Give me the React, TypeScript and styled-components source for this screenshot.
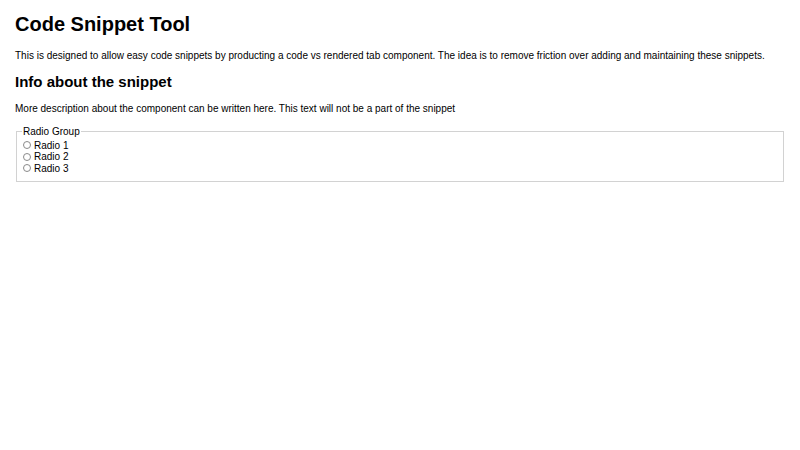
import React from "react";
import styled, { createGlobalStyle } from "styled-components";

const GlobalStyle = createGlobalStyle`
  html, body {
    margin: 0;
    padding: 0;
    background: #ffffff;
  }
  body {
    font-family: "Liberation Sans", Arial, sans-serif;
    color: #000000;
  }
`;

const Page = styled.main`
  padding: 0 15px;
  display: flow-root;
`;

const Title = styled.h1`
  font-size: 20px;
  font-weight: bold;
  margin: 13.4px 0;
`;

const Text = styled.p`
  font-size: 10px;
  margin: 10px 0;
`;

const Subtitle = styled.h2`
  font-size: 15px;
  font-weight: bold;
  margin: 12.45px 0;
`;

const Group = styled.fieldset`
  margin: 12px 1px 0;
  padding: 3px 6px 7px;
  border: 1px solid #d2d2d2;
  font-size: 10px;
`;

const Legend = styled.legend`
  padding: 0 1px;
  margin-left: -1px;
  font-size: 10px;
`;

const Option = styled.label`
  display: flex;
  align-items: center;
  font-size: 10px;
  line-height: 11.5px;
`;

const Radio = styled.input`
  appearance: none;
  box-sizing: border-box;
  width: 8px;
  height: 8px;
  margin: 0 3px 0 0;
  border: 1px solid #8a8a8a;
  border-radius: 50%;
  background: #ffffff;
`;

const options = ["Radio 1", "Radio 2", "Radio 3"];

export default function App() {
  return (
    <>
      <GlobalStyle />
      <Page>
        <Title>Code Snippet Tool</Title>
        <Text>
          This is designed to allow easy code snippets by producting a code vs rendered tab
          component. The idea is to remove friction over adding and maintaining these snippets.
        </Text>
        <Subtitle>Info about the snippet</Subtitle>
        <Text>
          More description about the component can be written here. This text will not be a
          part of the snippet
        </Text>
        <Group>
          <Legend>Radio Group</Legend>
          {options.map((o) => (
            <Option key={o}>
              <Radio type="radio" name="radio-group" value={o} />
              {o}
            </Option>
          ))}
        </Group>
      </Page>
    </>
  );
}
